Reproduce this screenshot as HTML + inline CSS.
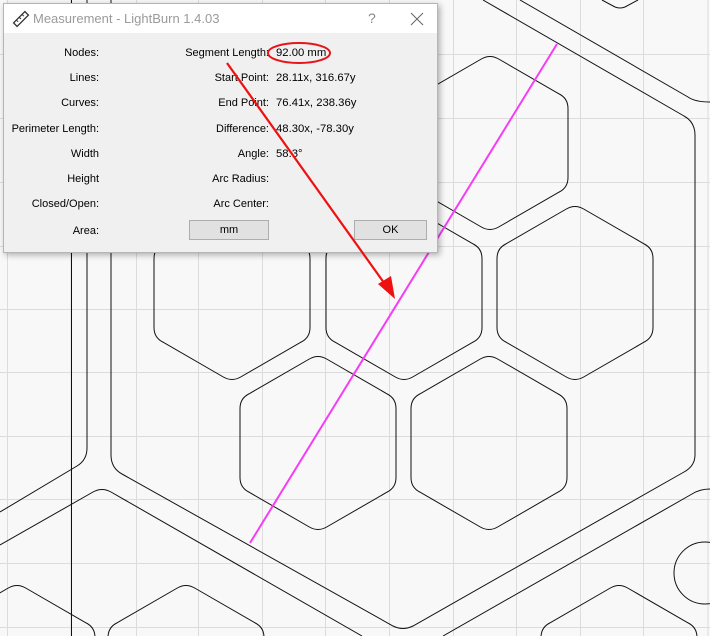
<!DOCTYPE html>
<html><head><meta charset="utf-8"><style>
html,body{margin:0;padding:0;width:710px;height:636px;overflow:hidden;background:#f8f8f8;font-family:"Liberation Sans",sans-serif;position:relative}
svg{position:absolute;left:0;top:0}
#dlg{position:absolute;left:3px;top:3px;width:435px;height:250px;background:#f0f0f0;border:1px solid #b5b5b5;box-sizing:border-box;box-shadow:2px 2px 6px rgba(0,0,0,0.3)}
#title{position:absolute;left:0;top:0;width:100%;height:29px;background:#fff}
#title .t{position:absolute;left:29px;top:7px;font-size:13px;color:#9a9a9a}
#title .q{position:absolute;left:364px;top:6px;font-size:14px;color:#888}
.l{position:absolute;font-size:11px;color:#000;text-align:right;white-space:nowrap}
.c1{right:338px}
.c2{right:168px}
.v{position:absolute;left:272px;font-size:11.3px;color:#000;white-space:nowrap}
.btn{position:absolute;top:216px;height:20px;background:#e1e1e1;border:1px solid #adadad;box-sizing:border-box;font-size:11px;text-align:center;line-height:18px}
</style></head><body>
<svg width="710" height="636" viewBox="0 0 710 636">
<defs>
<path id="hx" d="M -8.66,-84 Q 0,-89 8.66,-84 L 69.3,-49 Q 78,-44.5 78,-34.5 L 78,34.5 Q 78,44.5 69.3,49 L 8.66,84 Q 0,89 -8.66,84 L -69.3,49 Q -78,44.5 -78,34.5 L -78,-34.5 Q -78,-44.5 -69.3,-49 Z" fill="none" stroke="#111" stroke-width="1"/>
</defs>
<g stroke="#dcdcdc" stroke-width="1">
<line x1="7.5" y1="0" x2="7.5" y2="636"/><line x1="71" y1="0" x2="71" y2="636"/><line x1="136.5" y1="0" x2="136.5" y2="636"/><line x1="198.5" y1="0" x2="198.5" y2="636"/><line x1="262.5" y1="0" x2="262.5" y2="636"/><line x1="325.5" y1="0" x2="325.5" y2="636"/><line x1="389.5" y1="0" x2="389.5" y2="636"/><line x1="453.5" y1="0" x2="453.5" y2="636"/><line x1="516.5" y1="0" x2="516.5" y2="636"/><line x1="580.5" y1="0" x2="580.5" y2="636"/><line x1="643.5" y1="0" x2="643.5" y2="636"/><line x1="708" y1="0" x2="708" y2="636"/>
<line x1="0" y1="54.5" x2="710" y2="54.5"/><line x1="0" y1="118.5" x2="710" y2="118.5"/><line x1="0" y1="182.5" x2="710" y2="182.5"/><line x1="0" y1="246.5" x2="710" y2="246.5"/><line x1="0" y1="309.5" x2="710" y2="309.5"/><line x1="0" y1="372.5" x2="710" y2="372.5"/><line x1="0" y1="436.5" x2="710" y2="436.5"/><line x1="0" y1="499.5" x2="710" y2="499.5"/><line x1="0" y1="563.5" x2="710" y2="563.5"/><line x1="0" y1="627.5" x2="710" y2="627.5"/>
</g>
<g fill="none" stroke="#111" stroke-width="1">
<line x1="71.5" y1="0" x2="71.5" y2="636"/>
<path d="M87,0 L87,448 Q87,460 77,466 L0,512"/>
<path d="M0,545 L93,492 Q102,487 111,492 L362,636"/>
<path d="M111,0 L111,455 Q111,468 122,474 L393,626 Q403,631 413,626 L684,472 Q695,466 695,455 L695,135 Q695,122 684,116 L483,0"/>
<path d="M710,489 Q700,489 692,494 L443,636"/>
<path d="M520,0 L688,97 Q695,102 710,102"/>
<path d="M602,0 L615,7 Q620,9 625,7 L638,0"/>
<circle cx="705" cy="573" r="31"/>
</g>
<use href="#hx" x="318" y="443"/><use href="#hx" x="489" y="443"/>
<use href="#hx" x="232" y="293"/><use href="#hx" x="404" y="293"/><use href="#hx" x="575" y="293"/>
<use href="#hx" x="490" y="143"/><use href="#hx" x="318" y="143"/>
<use href="#hx" x="17" y="672"/><use href="#hx" x="186" y="672"/><use href="#hx" x="619" y="672"/>
<line x1="250" y1="543" x2="557" y2="44" stroke="#f63cf6" stroke-width="2"/>
</svg>
<div id="dlg">
<div id="title">
<svg width="20" height="20" style="left:7px;top:5px" viewBox="0 0 20 20"><g transform="rotate(-45 10 10)"><rect x="2" y="7.5" width="16" height="5" fill="none" stroke="#333" stroke-width="1.3"/><line x1="6" y1="7.5" x2="6" y2="10" stroke="#333"/><line x1="10" y1="7.5" x2="10" y2="10" stroke="#333"/><line x1="14" y1="7.5" x2="14" y2="10" stroke="#333"/></g></svg>
<span class="t">Measurement - LightBurn 1.4.03</span><span class="q">?</span>
<svg width="14" height="14" style="left:406px;top:8px" viewBox="0 0 14 14"><path d="M1,1 L13,13 M13,1 L1,13" stroke="#666" stroke-width="1"/></svg>
</div>
<div class="l c1" style="top:43px">Nodes:</div>
<div class="l c1" style="top:68px">Lines:</div>
<div class="l c1" style="top:93px">Curves:</div>
<div class="l c1" style="top:119px">Perimeter Length:</div>
<div class="l c1" style="top:144px">Width</div>
<div class="l c1" style="top:169px">Height</div>
<div class="l c1" style="top:194px">Closed/Open:</div>
<div class="l c1" style="top:221px">Area:</div>
<div class="l c2" style="top:43px">Segment Length:</div>
<div class="l c2" style="top:68px">Start Point:</div>
<div class="l c2" style="top:93px">End Point:</div>
<div class="l c2" style="top:119px">Difference:</div>
<div class="l c2" style="top:144px">Angle:</div>
<div class="l c2" style="top:169px">Arc Radius:</div>
<div class="l c2" style="top:194px">Arc Center:</div>
<div class="v" style="top:43px">92.00 mm</div>
<div class="v" style="top:68px">28.11x, 316.67y</div>
<div class="v" style="top:93px">76.41x, 238.36y</div>
<div class="v" style="top:119px">48.30x, -78.30y</div>
<div class="v" style="top:144px">58.3°</div>
<div class="btn" style="left:185px;width:80px">mm</div>
<div class="btn" style="left:350px;width:73px">OK</div>
</div>
<svg width="710" height="636" viewBox="0 0 710 636">
<ellipse cx="299" cy="53" rx="31" ry="10" fill="none" stroke="#e8141c" stroke-width="2"/>
<line x1="227" y1="63" x2="387" y2="287" stroke="#ee1111" stroke-width="2.2"/>
<polygon points="395,299 378,284 391,276" fill="#ee1111"/>
</svg>
</body></html>
